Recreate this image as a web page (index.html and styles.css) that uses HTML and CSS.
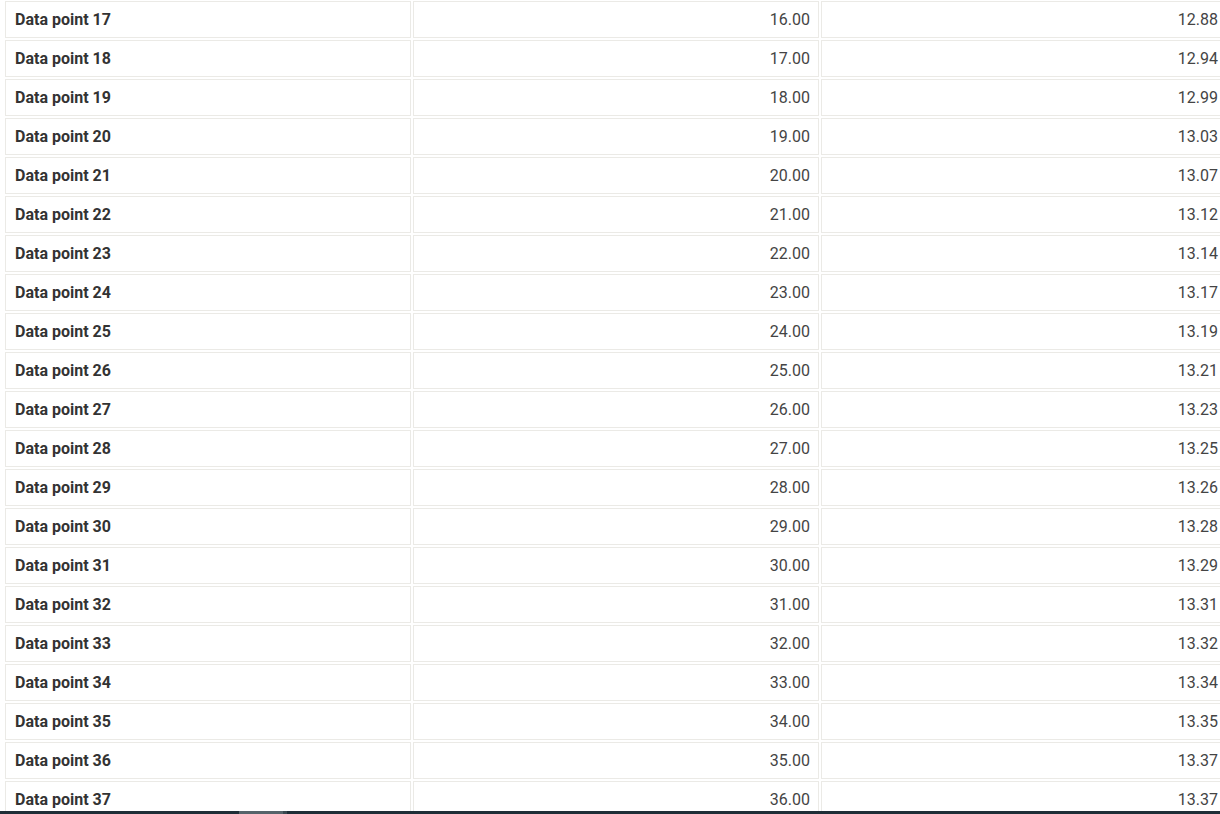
FILE: index.html
```html
<!DOCTYPE html>
<html lang="en">
<head>
<meta charset="utf-8">
<title>Data table</title>
<link rel="stylesheet" href="styles.css">
</head>
<body>
<table class="data">
<colgroup><col class="c"><col class="c"><col class="c"></colgroup>
<tbody>
<tr><th>Data point 17</th><td>16.00</td><td>12.88</td></tr>
<tr><th>Data point 18</th><td>17.00</td><td>12.94</td></tr>
<tr><th>Data point 19</th><td>18.00</td><td>12.99</td></tr>
<tr><th>Data point 20</th><td>19.00</td><td>13.03</td></tr>
<tr><th>Data point 21</th><td>20.00</td><td>13.07</td></tr>
<tr><th>Data point 22</th><td>21.00</td><td>13.12</td></tr>
<tr><th>Data point 23</th><td>22.00</td><td>13.14</td></tr>
<tr><th>Data point 24</th><td>23.00</td><td>13.17</td></tr>
<tr><th>Data point 25</th><td>24.00</td><td>13.19</td></tr>
<tr><th>Data point 26</th><td>25.00</td><td>13.21</td></tr>
<tr><th>Data point 27</th><td>26.00</td><td>13.23</td></tr>
<tr><th>Data point 28</th><td>27.00</td><td>13.25</td></tr>
<tr><th>Data point 29</th><td>28.00</td><td>13.26</td></tr>
<tr><th>Data point 30</th><td>29.00</td><td>13.28</td></tr>
<tr><th>Data point 31</th><td>30.00</td><td>13.29</td></tr>
<tr><th>Data point 32</th><td>31.00</td><td>13.31</td></tr>
<tr><th>Data point 33</th><td>32.00</td><td>13.32</td></tr>
<tr><th>Data point 34</th><td>33.00</td><td>13.34</td></tr>
<tr><th>Data point 35</th><td>34.00</td><td>13.35</td></tr>
<tr><th>Data point 36</th><td>35.00</td><td>13.37</td></tr>
<tr><th>Data point 37</th><td>36.00</td><td>13.37</td></tr>
</tbody>
</table>
<div class="bottom-bar"><div class="thumb"></div><div class="thumb-edge"></div></div>
</body>
</html>
```
FILE: styles.css
```css
html, body {
  margin: 0;
  padding: 0;
  background: #ffffff;
  overflow: hidden;
  width: 1220px;
  height: 814px;
}
body {
  font-family: Roboto, "Liberation Sans", Arial, sans-serif;
  font-size: 16px;
  color: #333333;
}
.data {
  table-layout: fixed;
  width: 1226px;
  border-collapse: separate;
  border-spacing: 2px;
  margin: -1px 0 0 3px;
}
.data .c {
  width: 406px;
}
.data th,
.data td {
  height: 37px;
  box-sizing: border-box;
  border: 1px solid #ebeae6;
  padding: 0 8px 1px 9px;
  vertical-align: middle;
  white-space: nowrap;
}
.data th {
  text-align: left;
  font-weight: 700;
  color: #333333;
}
.data td {
  text-align: right;
  font-weight: 400;
  color: #444444;
}
.bottom-bar {
  position: fixed;
  left: 0;
  right: 0;
  bottom: 0;
  height: 3px;
  background: #1f2e37;
  display: flex;
}
.bottom-bar .thumb {
  margin-left: 239px;
  width: 44px;
  background: #56636a;
}
.bottom-bar .thumb-edge {
  width: 4px;
  background: #3a4850;
}
```
